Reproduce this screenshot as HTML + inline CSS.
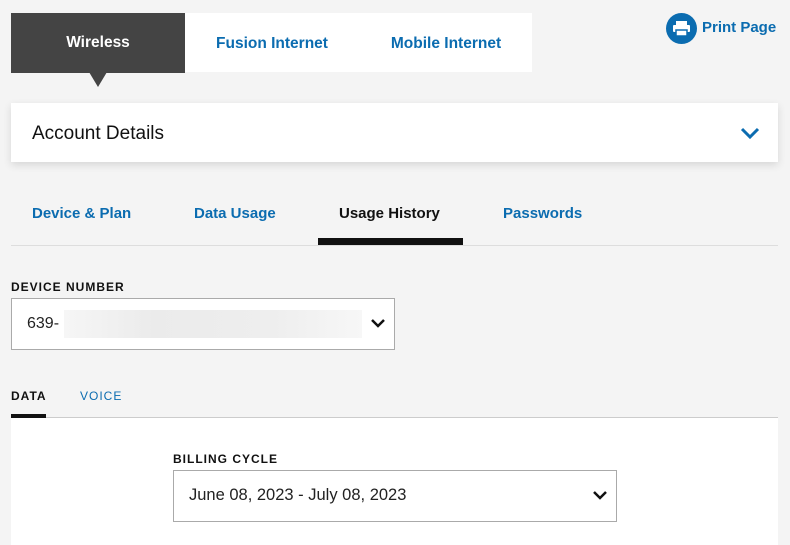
<!DOCTYPE html>
<html><head><style>
*{margin:0;padding:0;box-sizing:border-box}
body{width:790px;height:545px;background:#f4f4f4;font-family:"Liberation Sans",sans-serif;position:relative;overflow:hidden}
.a{position:absolute}
.blue{color:#0b6cb0}
</style></head><body>
<div class="a" style="left:11px;top:13px;width:521px;height:59px;background:#fff"></div>
<div class="a" style="left:11px;top:14px;width:174px;height:59px;background:#444;color:#fff;font-weight:bold;font-size:15.5px;line-height:57px;text-align:center">Wireless</div>
<div class="a" style="left:11px;top:13px;width:174px;height:59px;background:#444;color:#fff;font-weight:bold;font-size:15.5px;line-height:59px;text-align:center">Wireless</div>
<div class="a" style="left:89px;top:72px;width:0;height:0;border-left:9px solid transparent;border-right:9px solid transparent;border-top:15px solid #444"></div>
<div class="a blue" style="left:185px;top:14px;width:174px;line-height:59px;text-align:center;font-size:15.5px;font-weight:bold">Fusion Internet</div>
<div class="a blue" style="left:359px;top:14px;width:174px;line-height:59px;text-align:center;font-size:15.5px;font-weight:bold">Mobile Internet</div>
<svg class="a" style="left:666px;top:13px" width="31" height="31" viewBox="0 0 31 31"><circle cx="15.5" cy="15.5" r="15.5" fill="#0b6cb0"/><rect x="10" y="8" width="11" height="5" fill="#fff"/><rect x="7" y="12" width="17" height="7" rx="1" fill="#fff"/><rect x="10" y="17" width="11" height="6" fill="#fff" stroke="#0b6cb0" stroke-width="1.5"/></svg>
<div class="a blue" style="left:702px;top:19px;font-size:15px;font-weight:bold">Print Page</div>
<div class="a" style="left:11px;top:103px;width:767px;height:59px;background:#fff;box-shadow:0 3px 8px rgba(0,0,0,.12)"></div>
<div class="a" style="left:32px;top:123px;font-size:19px;color:#111">Account Details</div>
<svg class="a" style="left:740px;top:126px" width="20" height="14"><path d="M2 3l8 8 8-8" stroke="#0b6cb0" stroke-width="3" fill="none"/></svg>
<div class="a blue" style="left:32px;top:205px;font-size:15px;font-weight:bold">Device &amp; Plan</div>
<div class="a blue" style="left:194px;top:205px;font-size:15px;font-weight:bold">Data Usage</div>
<div class="a" style="left:339px;top:205px;font-size:15px;font-weight:bold;color:#111">Usage History</div>
<div class="a blue" style="left:503px;top:205px;font-size:15px;font-weight:bold">Passwords</div>
<div class="a" style="left:11px;top:245px;width:767px;height:1px;background:#ddd"></div>
<div class="a" style="left:318px;top:238px;width:145px;height:7px;background:#111"></div>
<div class="a" style="left:11px;top:280px;font-size:12px;font-weight:bold;letter-spacing:1px;color:#111">DEVICE NUMBER</div>
<div class="a" style="left:11px;top:298px;width:384px;height:52px;background:#fff;border:1px solid #aaa"></div>
<div class="a" style="left:27px;top:315px;font-size:16px;color:#222">639-</div>
<div class="a" style="left:64px;top:310px;width:298px;height:28px;background:linear-gradient(90deg,#f6f6f6,#ebebeb 30%,#eee 70%,#f7f7f7)"></div>
<svg class="a" style="left:370px;top:317px" width="16" height="12"><path d="M2 3l6 6 6-6" stroke="#111" stroke-width="2.5" fill="none"/></svg>
<div class="a" style="left:11px;top:389px;font-size:12px;font-weight:bold;letter-spacing:1px;color:#111">DATA</div>
<div class="a blue" style="left:80px;top:389px;font-size:12px;letter-spacing:1px">VOICE</div>
<div class="a" style="left:11px;top:417px;width:767px;height:1px;background:#ccc"></div>
<div class="a" style="left:11px;top:414px;width:35px;height:4px;background:#111"></div>
<div class="a" style="left:11px;top:418px;width:767px;height:127px;background:#fff"></div>
<div class="a" style="left:173px;top:452px;font-size:12px;font-weight:bold;letter-spacing:1px;color:#111">BILLING CYCLE</div>
<div class="a" style="left:173px;top:470px;width:444px;height:52px;border:1px solid #aaa;background:#fff"></div>
<div class="a" style="left:189px;top:486px;font-size:16.5px;color:#222">June 08, 2023 - July 08, 2023</div>
<svg class="a" style="left:592px;top:489px" width="16" height="12"><path d="M2 3l6 6 6-6" stroke="#111" stroke-width="2.5" fill="none"/></svg>
</body></html>
